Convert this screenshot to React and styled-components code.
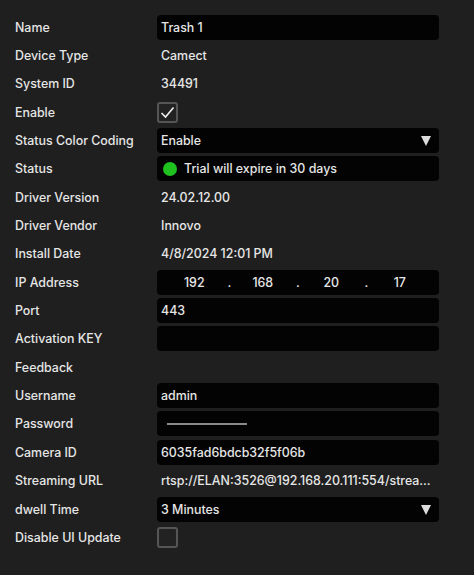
import styled, { createGlobalStyle } from 'styled-components';

const GlobalStyle = createGlobalStyle`
  html, body {
    margin: 0;
    padding: 0;
    background: #1f1f1f;
  }
  * { box-sizing: border-box; }
`;

const Panel = styled.div`
  min-height: 575px;
  background: #1f1f1f;
  padding: 13px 0 0 15px;
  font-family: Inter, "Noto Sans", sans-serif;
  font-size: 12.4px;
  font-weight: 500;
  color: #e6e6e6;
`;

const Row = styled.div`
  display: grid;
  grid-template-columns: 142px 282px;
  align-items: center;
  height: 28.35px;
`;

const Label = styled.div`
  white-space: nowrap;
`;

const Value = styled.div`
  padding-left: 4px;
  white-space: nowrap;
`;

const Field = styled.div`
  height: 25px;
  background: #030303;
  border-radius: 4px;
  display: flex;
  align-items: center;
  padding: 0 4px;
  gap: 7px;
  position: relative;
  white-space: nowrap;
`;

const Arrow = styled.span`
  position: absolute;
  right: 8px;
  top: 8px;
  width: 0;
  height: 0;
  border-left: 5px solid transparent;
  border-right: 5px solid transparent;
  border-top: 10px solid #dcdcdc;
`;

const Dot = styled.span`
  width: 14px;
  height: 14px;
  border-radius: 50%;
  background: #1ec11e;
  margin-left: 2px;
  flex-shrink: 0;
`;

const Octet = styled.span`
  flex: 1;
  text-align: center;
`;

const Sep = styled.span`
  width: 2px;
  text-align: center;
`;

const IpField = styled(Field)`
  gap: 0;
  padding: 0 6px 0 4px;
`;

const Mask = styled.span`
  display: block;
  width: 80px;
  height: 2px;
  margin-left: 6px;
  background: #8a8a8a;
`;

const Check = styled.span`
  width: 21px;
  height: 21px;
  border: 2px solid #555;
  border-radius: 3px;
  background: #222;
  display: flex;
  align-items: center;
  justify-content: center;
`;

const rows = [
  ['Name', { field: 'Trash 1' }],
  ['Device Type', { text: 'Camect' }],
  ['System ID', { text: '34491' }],
  ['Enable', { check: true }],
  ['Status Color Coding', { select: 'Enable' }],
  ['Status', { status: 'Trial will expire in 30 days' }],
  ['Driver Version', { text: '24.02.12.00' }],
  ['Driver Vendor', { text: 'Innovo' }],
  ['Install Date', { text: '4/8/2024 12:01 PM' }],
  ['IP Address', { ip: ['192', '168', '20', '17'] }],
  ['Port', { field: '443' }],
  ['Activation KEY', { field: '' }],
  ['Feedback', {}],
  ['Username', { field: 'admin' }],
  ['Password', { password: true }],
  ['Camera ID', { field: '6035fad6bdcb32f5f06b' }],
  ['Streaming URL', { text: 'rtsp://ELAN:3526@192.168.20.111:554/strea...' }],
  ['dwell Time', { select: '3 Minutes' }],
  ['Disable UI Update', { check: false }],
];

const renderValue = (v) => {
  if (v.field !== undefined) return <Field>{v.field}</Field>;
  if (v.text) return <Value>{v.text}</Value>;
  if (v.select) return <Field>{v.select}<Arrow /></Field>;
  if (v.status) return <Field><Dot />{v.status}</Field>;
  if (v.password) return <Field><Mask /></Field>;
  if (v.ip) {
    return (
      <IpField>
        {v.ip.map((o, i) => [
          <Octet key={o}>{o}</Octet>,
          i < 3 && <Sep key={o + 'd'}>.</Sep>,
        ])}
      </IpField>
    );
  }
  if (v.check !== undefined) {
    return (
      <Check>
        {v.check && (
          <svg width="15" height="13" viewBox="0 0 15 13">
            <path d="M1.5 7 L5.5 11 L13.5 1.5" fill="none" stroke="#f0f0f0" strokeWidth="1.6" />
          </svg>
        )}
      </Check>
    );
  }
  return <span />;
};

export default function App() {
  return (
    <>
      <GlobalStyle />
      <Panel>
        {rows.map(([label, v]) => (
          <Row key={label}>
            <Label>{label}</Label>
            {renderValue(v)}
          </Row>
        ))}
      </Panel>
    </>
  );
}
